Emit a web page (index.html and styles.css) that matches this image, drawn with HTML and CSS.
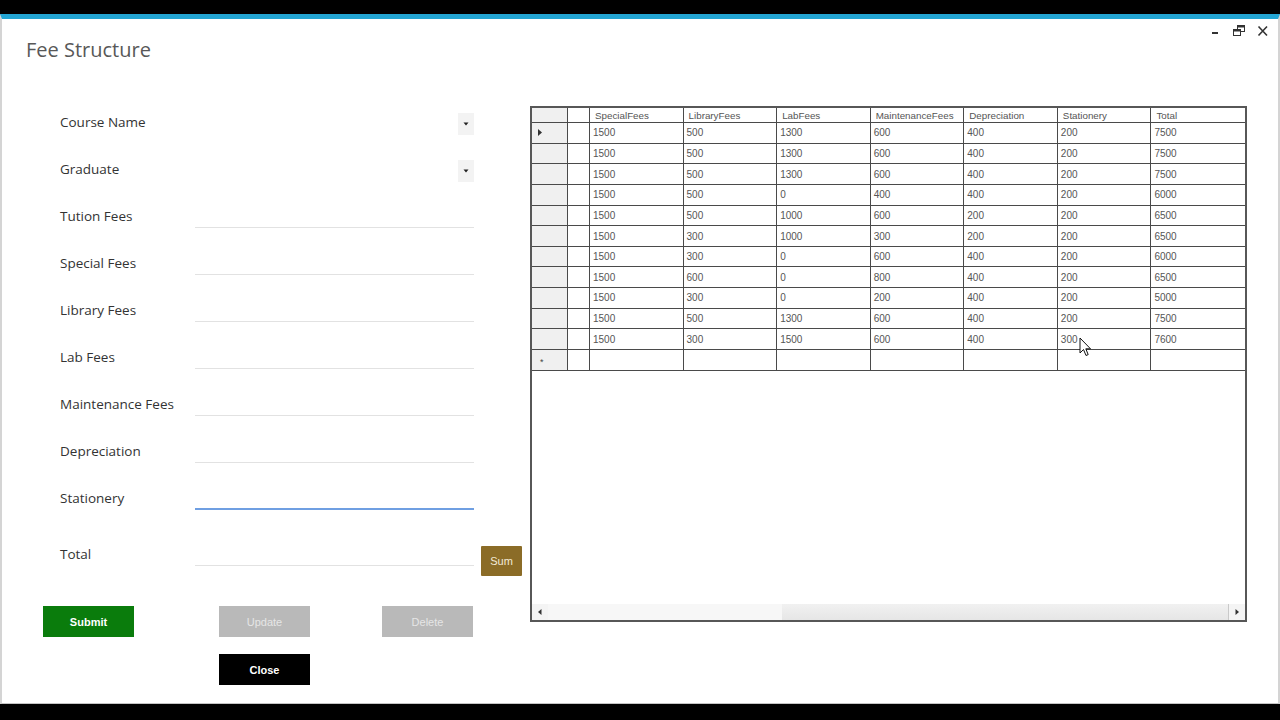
FILE: index.html
```html
<!DOCTYPE html>
<html>
<head>
<meta charset="utf-8">
<title>Fee Structure</title>
<link rel="stylesheet" href="styles.css">
</head>
<body>
<div class="window">
  <div class="titlebar">
    <h1 class="title">Fee Structure</h1>
    <div class="controls">
      <svg class="ctl" width="14" height="14" viewBox="0 0 14 14"><rect x="4" y="7" width="6" height="2" fill="#333"/></svg>
      <svg class="ctl" width="14" height="14" viewBox="0 0 14 14"><rect x="5.5" y="0.5" width="7" height="6" fill="none" stroke="#333"/><rect x="5.5" y="0.5" width="7" height="2" fill="#333"/><rect x="1.5" y="4.5" width="7" height="6" fill="#fff" stroke="#333"/><rect x="1.5" y="4.5" width="7" height="2" fill="#333"/></svg>
      <svg class="ctl" width="14" height="14" viewBox="0 0 14 14"><path d="M2.5 1.5 L11 10.5 M11 1.5 L2.5 10.5" stroke="#333" stroke-width="1.6" fill="none"/></svg>
    </div>
  </div>
  <div class="main">
    <div class="form">
      <div class="fields">
        <div class="row"><span class="label">Course Name</span><div class="select"><span class="arrow"><svg width="6" height="4" viewBox="0 0 6 4"><path d="M0.5 0.5 H5.5 L3 3.5 Z" fill="#222"/></svg></span></div></div>
        <div class="row"><span class="label">Graduate</span><div class="select"><span class="arrow"><svg width="6" height="4" viewBox="0 0 6 4"><path d="M0.5 0.5 H5.5 L3 3.5 Z" fill="#222"/></svg></span></div></div>
        <div class="row"><span class="label">Tution Fees</span><div class="field"></div></div>
        <div class="row"><span class="label">Special Fees</span><div class="field"></div></div>
        <div class="row"><span class="label">Library Fees</span><div class="field"></div></div>
        <div class="row"><span class="label">Lab Fees</span><div class="field"></div></div>
        <div class="row"><span class="label">Maintenance Fees</span><div class="field"></div></div>
        <div class="row"><span class="label">Depreciation</span><div class="field"></div></div>
        <div class="row"><span class="label">Stationery</span><div class="field active"></div></div>
        <div class="row total-row"><span class="label">Total</span><div class="field"></div><button class="btn sum">Sum</button></div>
      </div>
      <div class="actions">
        <div class="btn-row">
          <button class="btn submit">Submit</button>
          <button class="btn disabled update">Update</button>
          <button class="btn disabled delete">Delete</button>
        </div>
        <div class="btn-row second">
          <button class="btn close">Close</button>
        </div>
      </div>
    </div>
    <div class="grid">
      <div class="dg">
        <div class="c rh"></div><div class="c blank"></div><div class="c hd">SpecialFees</div><div class="c hd">LibraryFees</div><div class="c hd">LabFees</div><div class="c hd">MaintenanceFees</div><div class="c hd">Depreciation</div><div class="c hd">Stationery</div><div class="c hd">Total</div>
      </div>
      <div class="dg body" id="rows"></div>
      <div class="scroll">
        <span class="sbtn"><svg width="4" height="6" viewBox="0 0 4 6"><path d="M3.5 0 V6 L0 3 Z" fill="#333"/></svg></span>
        <span class="track"></span>
        <span class="thumb"></span>
        <span class="sbtn right"><svg width="4" height="6" viewBox="0 0 4 6"><path d="M0.5 0 V6 L4 3 Z" fill="#333"/></svg></span>
      </div>
      <svg class="cursor" width="13" height="20" viewBox="0 0 13 20"><path d="M1 1 V16 L4.5 12.5 L7 18.5 L9.2 17.6 L6.8 11.8 L11.5 11.8 Z" fill="#fff" stroke="#111" stroke-width="1"/></svg>
    </div>
  </div>
</div>
<script>
var data = [
[1500,500,1300,600,400,200,7500],
[1500,500,1300,600,400,200,7500],
[1500,500,1300,600,400,200,7500],
[1500,500,0,400,400,200,6000],
[1500,500,1000,600,200,200,6500],
[1500,300,1000,300,200,200,6500],
[1500,300,0,600,400,200,6000],
[1500,600,0,800,400,200,6500],
[1500,300,0,200,400,200,5000],
[1500,500,1300,600,400,200,7500],
[1500,300,1500,600,400,300,7600]
];
var html = '';
data.forEach(function(r, i){
  html += '<div class="c rh">' + (i === 0 ? '<svg width="4" height="7" viewBox="0 0 4 7"><path d="M0 0 L4 3.5 L0 7 Z" fill="#333"/></svg>' : '') + '</div><div class="c blank"></div>';
  r.forEach(function(v){ html += '<div class="c">' + v + '</div>'; });
});
html += '<div class="c rh"><span class="star">*</span></div><div class="c blank"></div>';
for (var k = 0; k < 7; k++) html += '<div class="c"></div>';
document.getElementById('rows').innerHTML = html;
</script>
</body>
</html>
```

FILE: styles.css
```css
html, body {
  margin: 0;
  padding: 0;
  background: #000;
  width: 1280px;
  height: 720px;
  overflow: hidden;
}

.window {
  margin-top: 14px;
  height: 690px;
  box-sizing: border-box;
  background: #fff;
  border-top: 5px solid #23a5d3;
  border-left: 2px solid #d4d4d4;
  border-right: 2px solid #d4d4d4;
  border-bottom: 1px solid #c4c4c4;
  display: flex;
  flex-direction: column;
  font-family: "Open Sans", "Liberation Sans", sans-serif;
}

.titlebar {
  height: 79px;
  display: flex;
  justify-content: space-between;
  align-items: flex-start;
  padding-left: 24px;
  padding-right: 8px;
}

.title {
  margin: 17px 0 0 0;
  font-size: 20px;
  line-height: 28px;
  font-weight: 400;
  color: #585858;
}

.controls {
  display: flex;
  gap: 10px;
  padding-top: 6px;
}

.ctl { display: block; }

.main {
  display: flex;
  align-items: flex-start;
}

.form {
  width: 528px;
  flex: none;
}

.fields {
  padding-left: 58px;
}

.row {
  display: flex;
  align-items: center;
  height: 47px;
}

.label {
  width: 135px;
  flex: none;
  font-size: 13.5px;
  color: #333;
}

.field {
  width: 279px;
  height: 24px;
  box-sizing: border-box;
  border-bottom: 1px solid #e2e2e2;
}

.field.active {
  border-bottom: 2px solid #6f9fe2;
}

.select {
  width: 279px;
  height: 24px;
  display: flex;
  justify-content: flex-end;
  align-items: center;
  position: relative;
  top: 2px;
}

.arrow {
  width: 16px;
  height: 22px;
  background: #f3f3f3;
  display: flex;
  align-items: center;
  justify-content: center;
}

.arrow svg { display: block; }

.total-row {
  margin-top: 9px;
}

.btn {
  border: none;
  padding: 0;
  font-family: "Liberation Sans", Arial, sans-serif;
  font-size: 11px;
  font-weight: 700;
  width: 91px;
  height: 31px;
  color: #fff;
}

.sum {
  width: 41px;
  height: 30px;
  margin-left: 7px;
  align-self: flex-end;
  margin-bottom: 1px;
  background: #8b6c27;
  color: #f3ead7;
  font-weight: 400;
  border-radius: 1px;
}

.actions {
  padding-left: 41px;
  margin-top: 29px;
}

.btn-row {
  display: flex;
}

.btn-row.second {
  margin-top: 17px;
  padding-left: 176px;
}

.submit { background: #0a7c0c; }

.disabled {
  background: #b9b9b9;
  color: #e6e6e6;
  font-weight: 400;
}

.update { margin-left: 85px; }
.delete { margin-left: 72px; }

.close { background: #000; }

.grid {
  margin-top: 8px;
  width: 717px;
  height: 516px;
  box-sizing: border-box;
  border: 2px solid #575757;
  background: #fff;
  display: flex;
  flex-direction: column;
  position: relative;
  font-family: "Liberation Sans", Arial, sans-serif;
  font-size: 10px;
  color: #555;
}

.dg {
  display: grid;
  grid-template-columns: 36px 22px repeat(7, 1fr);
  grid-auto-rows: 15px;
}

.dg.body {
  grid-auto-rows: 20.65px;
}

.c {
  box-sizing: border-box;
  border-right: 1px solid #4a4a4a;
  border-bottom: 1px solid #4a4a4a;
  padding-left: 3px;
  display: flex;
  align-items: center;
  white-space: nowrap;
  overflow: hidden;
}

.c:nth-child(9n) { border-right: none; }

.hd {
  padding-left: 5px;
  color: #555;
  font-size: 9.8px;
}

.rh {
  background: #f0f0f0;
  padding-left: 6px;
}

.rh svg { display: block; }

.star {
  font-size: 9px;
  color: #444;
  position: relative;
  top: 2px;
  left: 2px;
}

.blank { background: #fff; }

.scroll {
  margin-top: auto;
  height: 16px;
  display: flex;
  background: #f4f4f4;
}

.sbtn {
  width: 16px;
  flex: none;
  display: flex;
  align-items: center;
  justify-content: center;
  background: #f4f4f4;
}

.sbtn.right {
  border-left: 1px solid #c9c9c9;
}

.track {
  width: 234px;
  flex: none;
  background: #f7f7f7;
}

.thumb {
  flex: 1;
  background: linear-gradient(#f1f1f1, #e6e6e6);
}

.cursor {
  position: absolute;
  left: 547px;
  top: 229px;
}
```
